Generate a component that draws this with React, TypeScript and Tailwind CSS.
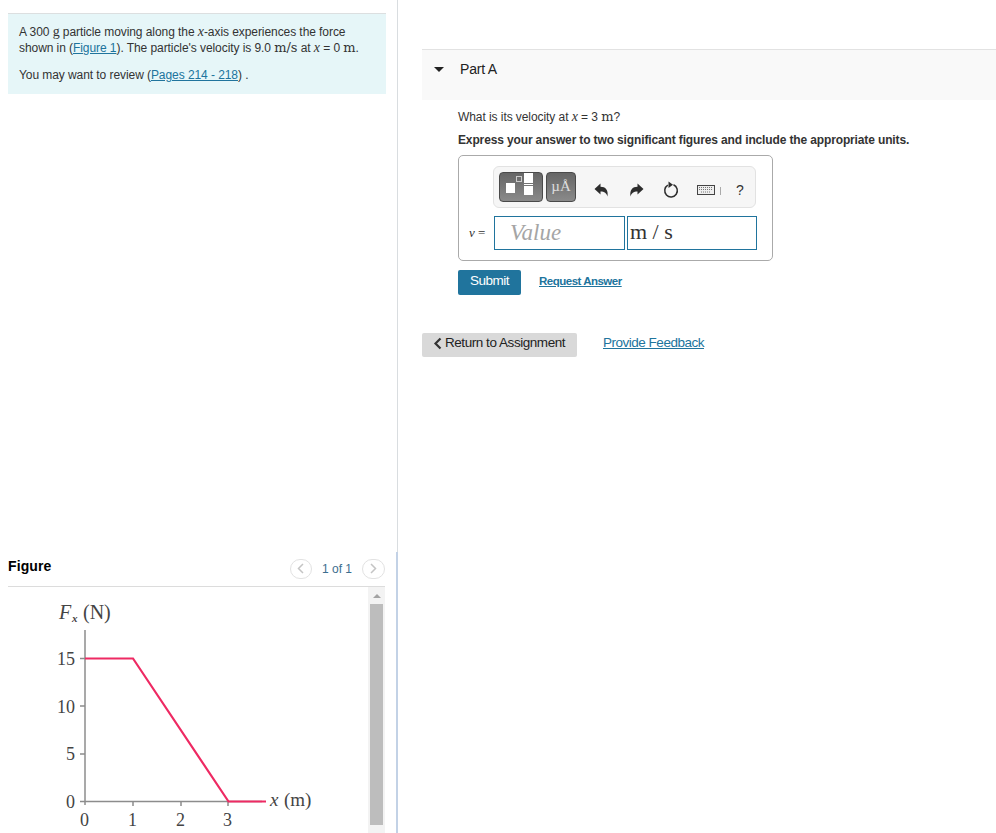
import React from "react";

const sans = "font-['Liberation_Sans',Arial,sans-serif]";
const serif = "font-['Liberation_Serif','Times_New_Roman',serif]";

function MathVar({ children }: { children: React.ReactNode }) {
  return <span className={`${serif} italic text-[14px] leading-none`}>{children}</span>;
}

function Unit({ children }: { children: React.ReactNode }) {
  return <span className="font-['DejaVu_Serif',serif] text-[13px] leading-none">{children}</span>;
}

function ForceChart() {
  return (
    <svg width="360" height="246" viewBox="0 587 360 246" className="block">
      <g fill="#444" fontFamily="'Liberation Serif', serif" fontSize="18">
        <text x="59" y="619" fontStyle="italic" fontSize="20">F</text>
        <text x="72" y="622" fontStyle="italic" fontWeight="bold" fontSize="11">x</text>
        <text x="83" y="619" fontSize="20">(N)</text>
        <text x="57" y="665">15</text>
        <text x="57" y="713">10</text>
        <text x="66" y="760">5</text>
        <text x="66" y="808">0</text>
        <text x="80" y="826">0</text>
        <text x="128" y="826">1</text>
        <text x="176" y="826">2</text>
        <text x="223" y="826">3</text>
        <text x="270" y="806" fontStyle="italic" fontSize="19">x</text>
        <text x="284" y="806" fontSize="19">(m)</text>
      </g>
      <g stroke="#8c8c8c" strokeWidth="1.500" fill="none">
        <path d="M85 630V805" />
        <path d="M85 801.500H262" />
        <path d="M80 658.500H85M80 706H85M80 754H85M80 801.500H85" />
        <path d="M133 801.500V806M181 801.500V806M228 801.500V806" />
      </g>
      <path d="M85 658.500H133L228.500 801.500H266" stroke="#ee2a63" strokeWidth="2.200" fill="none" />
    </svg>
  );
}

function Toolbar() {
  return (
    <div className="ml-[34px] h-[42px] w-[263px] rounded-md border border-[#e2e2e2] bg-[#f6f6f6] flex items-center pl-[5px]">
      <div className="w-[44px] h-[30px] rounded-[4px] border border-[#4a4a4a] bg-gradient-to-b from-[#666] to-[#8a8a8a] relative">
        <div className="absolute left-[6px] top-[10px] w-[9px] h-[10px] bg-white" />
        <div className="absolute left-[16px] top-[3px] w-[6px] h-[6px] border border-[#ccc]" />
        <div className="absolute left-[24px] top-0 w-[9px] h-[10px] bg-white" />
        <div className="absolute left-[24px] top-[11px] w-[9px] h-px bg-white" />
        <div className="absolute left-[24px] top-[13px] w-[9px] h-[9px] bg-white" />
      </div>
      <div className={`ml-[3px] w-[30px] h-[30px] rounded-[4px] border border-[#4a4a4a] bg-gradient-to-b from-[#666] to-[#8a8a8a] text-[#ddd] text-[15px] leading-[26px] text-center ${serif}`}>
        µÅ
      </div>
      <svg width="16" height="14" viewBox="0 0 16 14" className="ml-[18px] mt-[6px]">
        <path d="M0.500 6 6.500 0.500V3.800C11.500 3.800 14.500 7 13.500 13.500 12.500 10 10.500 8.500 6.500 8.500V11.500Z" fill="#2d2d2d" />
      </svg>
      <svg width="16" height="14" viewBox="0 0 16 14" className="ml-[18px] mt-[6px]">
        <path d="M15.500 6 9.500 0.500V3.800C4.500 3.800 1.500 7 2.500 13.500 3.500 10 5.500 8.500 9.500 8.500V11.500Z" fill="#2d2d2d" />
      </svg>
      <svg width="18" height="18" viewBox="0 0 18 18" className="ml-[18px] mt-[6px]">
        <path d="M5.800 4.200A6.300 6.300 0 1 0 11.500 3.800" stroke="#2d2d2d" strokeWidth="1.500" fill="none" />
        <path d="M6.500 0.500V7L11 3.700Z" fill="#2d2d2d" />
      </svg>
      <svg width="18" height="10" viewBox="0 0 18 10" className="ml-[17px] mt-[6px]">
        <rect x="0.500" y="0.500" width="17" height="9" fill="#eee" stroke="#444" />
        <path d="M2 2.500H16M2 4.500H16M4 7H14" stroke="#777" strokeWidth="1" strokeDasharray="1 1" />
      </svg>
      <div className="ml-[5px] w-px h-[8px] bg-[#aaa] mt-[8px]" />
      <div className={`ml-[15px] mt-[6px] text-[14px] text-[#333] ${sans}`}>?</div>
    </div>
  );
}

export default function App() {
  return (
    <div className={`w-[996px] h-[833px] overflow-hidden bg-white flex text-[#333] ${sans}`}>
      <div className="w-[398px] h-full flex flex-col relative shrink-0 border-r border-[#d9dde0]">
        <div className="absolute right-[-1px] bottom-0 w-[2px] h-[281px] bg-[#c3d2e6]" />
        <div className="mt-[13px] ml-2 w-[378px] h-[81px] border-t border-[#dcdfe0] bg-[#e6f6f8] px-[11px] pt-[10px] text-[12px] leading-[16px] tracking-[-0.07px]">
          <p>
            A 300 <span className={`${serif} text-[14px] leading-none`}>g</span> particle moving along the <MathVar>x</MathVar>-axis experiences the force
          </p>
          <p>
            shown in (<a className="text-[#20749d] underline">Figure 1</a>). The particle's velocity is 9.0 <Unit>m/s</Unit> at <MathVar>x</MathVar> = 0 <Unit>m</Unit>.
          </p>
          <p className="mt-[11px]">
            You may want to review (<a className="text-[#20749d] underline">Pages 214 - 218</a>) .
          </p>
        </div>

        <div className="flex-1" />

        <div className="ml-2 w-[377px] h-[35px] border-b border-[#dcdcdc] flex items-center justify-between pb-[6px]">
          <span className="text-[14px] font-bold text-black tracking-[0.1px]">Figure</span>
          <div className="flex items-center text-[12px] mt-[5px]">
            <span className="w-[22px] h-[20px] rounded-full border border-[#e2e2e2] flex items-center justify-center">
              <svg width="7" height="11" viewBox="0 0 7 11"><path d="M6 1 1.500 5.500 6 10" stroke="#c4c4c4" strokeWidth="1.500" fill="none" /></svg>
            </span>
            <span className="mx-[10px] text-[#3c6e8f]">1 of 1</span>
            <span className="w-[23px] h-[20px] rounded-full border border-[#e2e2e2] flex items-center justify-center">
              <svg width="7" height="11" viewBox="0 0 7 11"><path d="M1 1 5.500 5.500 1 10" stroke="#c4c4c4" strokeWidth="1.500" fill="none" /></svg>
            </span>
          </div>
        </div>
        <div className="ml-2 w-[377px] h-[246px] flex">
          <div className="w-[360px] -ml-2 shrink-0"><ForceChart /></div>
          <div className="w-[17px] ml-[8px] -mr-[8px] bg-[#f3f3f3] flex flex-col items-center shrink-0">
            <div className="h-[17px] flex items-center justify-center">
              <div className="w-0 h-0 border-x-[4px] border-x-transparent border-b-[4px] border-b-[#a3a3a3]" />
            </div>
            <div className="w-[13px] h-[221px] bg-[#bdbdbd]" />
          </div>
        </div>
      </div>

      <div className="flex-1 pl-[24px] pt-[49px]">
        <div className="h-[51px] border-t border-[#e2e2e2] bg-[#f9f9f9] flex items-start pt-[9px] text-[14px] text-[#222]">
          <div className="mt-[8px] ml-[12px] w-0 h-0 border-x-[5px] border-x-transparent border-t-[5px] border-t-[#222]" />
          <span className="ml-[16px] tracking-[-0.2px]">Part A</span>
        </div>
        <div className="pl-[36px]">
          <p className="mt-[9px] text-[12px] leading-[16px] tracking-[-0.07px]">
            What is its velocity at <MathVar>x</MathVar> = 3 <Unit>m</Unit>?
          </p>
          <p className="mt-[7px] text-[12px] leading-[16px] font-bold tracking-[-0.135px]">
            Express your answer to two significant figures and include the appropriate units.
          </p>
          <div className="mt-[7px] w-[315px] h-[106px] rounded-[5px] border border-[#aaa] pt-[10px]">
            <Toolbar />
            <div className="mt-[8px] flex items-center">
              <span className={`w-[35px] pl-[10px] text-[13px] ${serif}`}><i>v</i> =</span>
              <div className={`w-[131px] h-[34px] border border-[#20749d] pl-[15px] text-[23px] leading-[32px] italic text-[#a5a5a5] ${serif}`}>Value</div>
              <div className={`ml-[2px] w-[130px] h-[34px] border border-[#20749d] pl-[2px] text-[22px] leading-[30px] text-[#333] ${serif}`}>m / s</div>
            </div>
          </div>
          <div className="mt-[9px] flex items-center">
            <button className="w-[63px] h-[25px] bg-[#20749d] rounded-[2px] text-white text-[13.500px] tracking-[-0.5px] pb-[2px]">Submit</button>
            <a className="ml-[18px] mb-[2px] text-[11.500px] font-bold text-[#20749d] underline tracking-[-0.5px]">Request Answer</a>
          </div>
        </div>
        <div className="mt-[38px] flex items-center">
          <button className="w-[155px] h-[24px] bg-[#d9d9d9] rounded-[2px] flex items-center pl-[11px] pb-[4px] text-[13.500px] tracking-[-0.45px] text-[#222]">
            <svg width="9" height="13" viewBox="0 0 9 13" className="mr-[3px]"><path d="M7.500 1.500 2.500 6.500 7.500 11.500" stroke="#333" strokeWidth="2.200" fill="none" /></svg>
            Return to Assignment
          </button>
          <a className="ml-[26px] mb-[4px] text-[13.500px] text-[#20749d] underline tracking-[-0.49px]">Provide Feedback</a>
        </div>
      </div>
    </div>
  );
}
